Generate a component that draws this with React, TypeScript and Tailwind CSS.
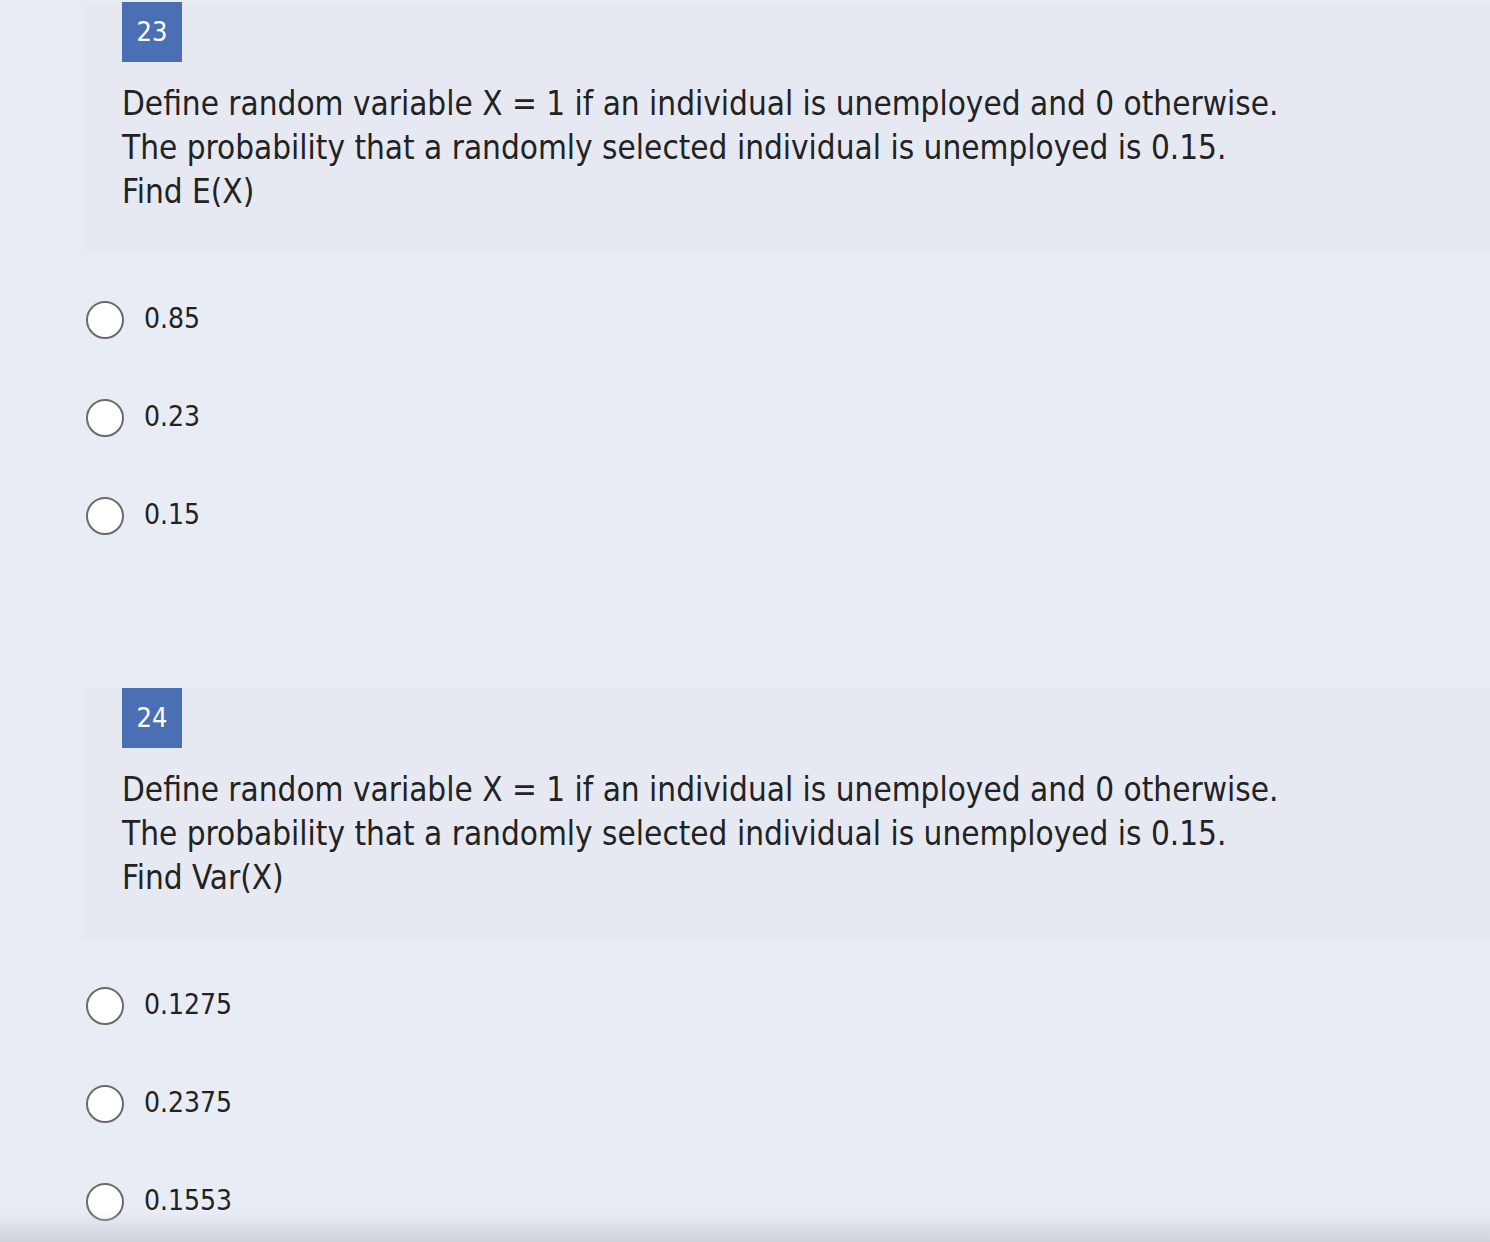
import React from "react";

type Question = {
  num: number;
  lines: string[];
  options: string[];
};

const questions: Question[] = [
  {
    num: 23,
    lines: [
      "Define random variable X = 1 if an individual is unemployed and 0 otherwise.",
      "The probability that a randomly selected individual is unemployed is 0.15.",
      "Find E(X)",
    ],
    options: ["0.85", "0.23", "0.15"],
  },
  {
    num: 24,
    lines: [
      "Define random variable X = 1 if an individual is unemployed and 0 otherwise.",
      "The probability that a randomly selected individual is unemployed is 0.15.",
      "Find Var(X)",
    ],
    options: ["0.1275", "0.2375", "0.1553"],
  },
];

function Radio({ label }: { label: string }) {
  return (
    <label className="flex h-[98px] items-center gap-[20px] pl-[86px]">
      <span className="h-[38px] w-[38px] shrink-0 rounded-full border-2 border-[#6b6b6b] bg-white" />
      <span className="-mt-[2px] text-[28px] text-[#222]">{label}</span>
    </label>
  );
}

function QuestionBlock({ q }: { q: Question }) {
  return (
    <section>
      <div className="ml-[82px] bg-[#e6e9f1] pb-[40px] pl-[40px]">
        <div className="flex h-[60px] w-[60px] items-center justify-center bg-[#4a6fb5] text-[27px] text-white">
          {q.num}
        </div>
        <div className="mt-[20px] text-[33px] leading-[44px] text-[#222]">
          {q.lines.map((l) => (
            <p key={l}>{l}</p>
          ))}
        </div>
      </div>
      <div className="pt-[17px]">
        {q.options.map((o) => (
          <Radio key={o} label={o} />
        ))}
      </div>
    </section>
  );
}

export default function App() {
  return (
    <div
      className="relative h-[1242px] w-[1490px] overflow-hidden bg-[#e8ecf5] pt-[2px]"
      style={{ fontFamily: '"DejaVu Sans Condensed", "DejaVu Sans", Verdana, sans-serif' }}
    >
      <QuestionBlock q={questions[0]} />
      <div className="h-[123px]" />
      <QuestionBlock q={questions[1]} />
      <div className="pointer-events-none absolute bottom-0 left-0 right-0 h-[30px] bg-gradient-to-b from-transparent to-[#cfd3dc]" />
    </div>
  );
}
